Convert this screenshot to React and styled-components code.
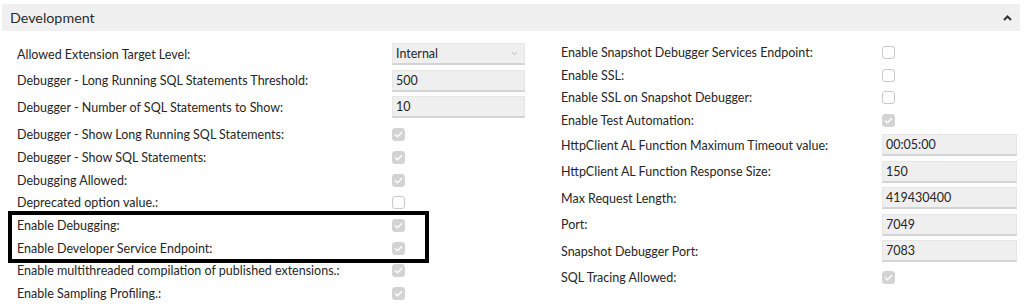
import React from "react";
import styled, { createGlobalStyle } from "styled-components";

const GlobalStyle = createGlobalStyle`
  body {
    margin: 0;
    background: #ffffff;
    font-family: "Lato", "Open Sans", sans-serif;
    color: #262626;
  }
`;

const Page = styled.div`
  position: relative;
  width: 1024px;
  height: 306px;
  padding-top: 4px;
  box-sizing: border-box;
  overflow: hidden;
`;

const SectionHeader = styled.div`
  margin: 0 4px 0 2px;
  height: 27px;
  background: #f0f0f0;
  display: flex;
  align-items: center;
  justify-content: space-between;
  padding: 0 8px 0 8px;
  font-size: 14.3px;
  color: #2b2b2b;
`;

const Columns = styled.div`
  display: grid;
  grid-template-columns: 508px 456px;
  column-gap: 36px;
  padding: 10px 0 0 17px;
`;

const Column = styled.div`
  display: flex;
  flex-direction: column;
`;

const Row = styled.div`
  display: grid;
  grid-template-columns: ${(p) => p.labelWidth}px ${(p) => p.controlWidth}px;
  align-items: center;
  height: ${(p) => (p.kind === "input" ? 26.5 : 22.7)}px;
  margin-top: ${(p) => p.gap || 0}px;
  font-size: 12.5px;
`;

const Label = styled.span`
  white-space: nowrap;
`;

const TextBox = styled.div`
  height: 22px;
  box-sizing: border-box;
  background: #efefef;
  border: 1px solid #e6e6e6;
  border-bottom: 2px solid #d4d4d4;
  display: flex;
  align-items: center;
  justify-content: space-between;
  padding: 0 6px 0 3px;
  font-size: 12.5px;
`;

const Caret = styled.svg`
  width: 7px;
  height: 5px;
`;

const Box = styled.div`
  width: 13px;
  height: 13px;
  box-sizing: border-box;
  border-radius: 3px;
  background: ${(p) => (p.checked ? "#d3d3d3" : "#ffffff")};
  border: 1px solid ${(p) => (p.checked ? "#d3d3d3" : "#c9c9c9")};
  display: flex;
  align-items: center;
  justify-content: center;
`;

const Highlight = styled.div`
  position: absolute;
  left: 8px;
  top: 211px;
  width: 421px;
  height: 52px;
  box-sizing: border-box;
  border: 4px solid #000000;
  pointer-events: none;
`;

const Check = ({ checked }) => (
  <Box checked={checked}>
    {checked && (
      <svg width="9" height="7" viewBox="0 0 9 7">
        <path d="M1 3.6 L3.4 5.8 L8 1.2" fill="none" stroke="#ffffff" strokeWidth="1.4" />
      </svg>
    )}
  </Box>
);

const left = [
  { label: "Allowed Extension Target Level:", value: "Internal", select: true },
  { label: "Debugger - Long Running SQL Statements Threshold:", value: "500" },
  { label: "Debugger - Number of SQL Statements to Show:", value: "10" },
  { label: "Debugger - Show Long Running SQL Statements:", checked: true, gap: 3 },
  { label: "Debugger - Show SQL Statements:", checked: true },
  { label: "Debugging Allowed:", checked: true },
  { label: "Deprecated option value.:", checked: false },
  { label: "Enable Debugging:", checked: true },
  { label: "Enable Developer Service Endpoint:", checked: true },
  { label: "Enable multithreaded compilation of published extensions.:", checked: true },
  { label: "Enable Sampling Profiling.:", checked: true },
];

const right = [
  { label: "Enable Snapshot Debugger Services Endpoint:", checked: false },
  { label: "Enable SSL:", checked: false },
  { label: "Enable SSL on Snapshot Debugger:", checked: false },
  { label: "Enable Test Automation:", checked: true },
  { label: "HttpClient AL Function Maximum Timeout value:", value: "00:05:00" },
  { label: "HttpClient AL Function Response Size:", value: "150" },
  { label: "Max Request Length:", value: "419430400" },
  { label: "Port:", value: "7049" },
  { label: "Snapshot Debugger Port:", value: "7083" },
  { label: "SQL Tracing Allowed:", checked: true, gap: 2 },
];

const Setting = ({ item, labelWidth, controlWidth }) => {
  const isInput = item.value !== undefined;
  return (
    <Row
      kind={isInput ? "input" : "check"}
      gap={item.gap}
      labelWidth={labelWidth}
      controlWidth={controlWidth}
    >
      <Label>{item.label}</Label>
      {isInput ? (
        <TextBox>
          {item.value}
          {item.select && (
            <Caret viewBox="0 0 7 5">
              <path d="M1 1.2 L3.5 3.6 L6 1.2" fill="none" stroke="#b5b5b5" strokeWidth="1" />
            </Caret>
          )}
        </TextBox>
      ) : (
        <Check checked={item.checked} />
      )}
    </Row>
  );
};

export default function App() {
  return (
    <>
      <GlobalStyle />
      <Page>
        <SectionHeader>
          <span>Development</span>
          <svg width="9" height="6" viewBox="0 0 9 6">
            <path d="M1 5 L4.5 1.5 L8 5" fill="none" stroke="#333333" strokeWidth="2" />
          </svg>
        </SectionHeader>
        <Columns>
          <Column>
            {left.map((item) => (
              <Setting key={item.label} item={item} labelWidth={375} controlWidth={133} />
            ))}
          </Column>
          <Column>
            {right.map((item) => (
              <Setting key={item.label} item={item} labelWidth={321} controlWidth={135} />
            ))}
          </Column>
        </Columns>
        <Highlight />
      </Page>
    </>
  );
}
